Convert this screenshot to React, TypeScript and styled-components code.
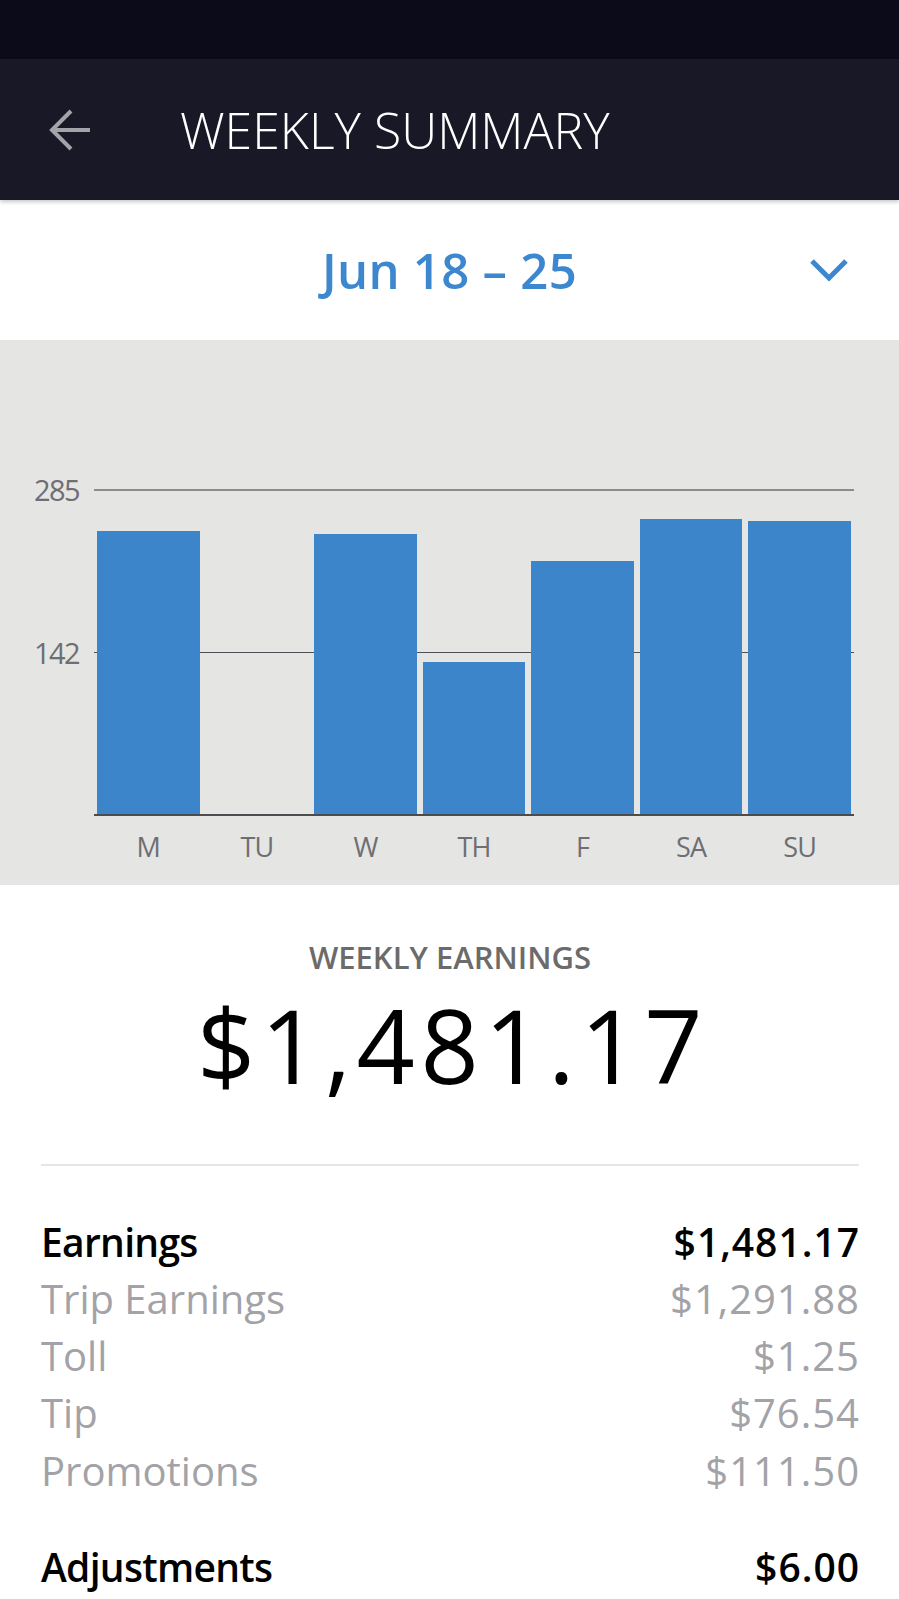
import React from "react";
import styled, { createGlobalStyle } from "styled-components";

const GlobalStyle = createGlobalStyle`
  html, body { margin: 0; padding: 0; background: #ffffff; }
  body { font-family: "Open Sans", "Noto Sans", "Liberation Sans", sans-serif; -webkit-font-smoothing: antialiased; }
  * { box-sizing: border-box; }
`;

const Screen = styled.div`
  width: 899px;
  min-height: 1599px;
  background: #ffffff;
  overflow: hidden;
`;

const StatusBar = styled.div`
  height: 59px;
  background: #0b0b1a;
`;

const AppBar = styled.header`
  height: 141px;
  background: #181826;
  display: flex;
  align-items: center;
  padding-left: 47px;
  position: relative;
  z-index: 2;
  box-shadow: 0 2px 4px rgba(0, 0, 0, 0.22);
`;

const BackButton = styled.button`
  width: 46px;
  height: 46px;
  padding: 0;
  border: none;
  background: none;
  display: flex;
  align-items: center;
  justify-content: center;
  margin-right: 87px;
`;

const Title = styled.h1`
  margin: 0;
  font-size: 50px;
  font-weight: 300;
  color: #ffffff;
  letter-spacing: 0;
  line-height: 1;
`;

const DateRow = styled.div`
  height: 140px;
  display: flex;
  align-items: center;
  justify-content: center;
  position: relative;
`;

const DateText = styled.span`
  font-size: 49px;
  font-weight: 600;
  color: #3c87cd;
  line-height: 1;
  letter-spacing: 0.3px;
`;

const ChevronButton = styled.button`
  position: absolute;
  right: 50px;
  top: 50%;
  transform: translateY(-50%);
  padding: 0;
  border: none;
  background: none;
  display: flex;
`;

const ChartSection = styled.section`
  height: 545px;
  background: #e5e5e3;
  padding-top: 132px;
`;

const PlotArea = styled.div`
  position: relative;
  height: 344px;
  margin-right: 45px;
`;

const GridRow = styled.div`
  position: absolute;
  left: 0;
  right: 0;
  display: flex;
  align-items: center;
  transform: translateY(-50%);
  z-index: 0;
`;

const AxisLabel = styled.span`
  width: 79px;
  text-align: right;
  font-size: 29px;
  color: #6e6e73;
  line-height: 32px;
  letter-spacing: -1.6px;
`;

const GridLine = styled.div<{ $tone: string }>`
  flex: 1;
  margin-left: 15px;
  height: 1.5px;
  background: ${(p) => p.$tone};
`;

const Bars = styled.div`
  position: relative;
  z-index: 1;
  margin-left: 94px;
  height: 100%;
  display: flex;
  align-items: flex-end;
  gap: 6px;
  padding: 0 3px;
  border-bottom: 2px solid #4b4b50;
`;

const BarSlot = styled.div`
  flex: 1;
  height: 100%;
  display: flex;
  align-items: flex-end;
`;

const Bar = styled.div`
  width: 100%;
  background: #3c85cb;
`;

const XAxis = styled.div`
  margin-left: 94px;
  margin-right: 45px;
  display: flex;
  gap: 6px;
  padding: 0 3px;
  height: 60px;
  align-items: center;
`;

const DayLabel = styled.span`
  flex: 1;
  text-align: center;
  font-size: 27px;
  color: #6e6e73;
  letter-spacing: -0.8px;
`;

const Summary = styled.section`
  padding: 54px 40px 0 41px;
  display: flex;
  flex-direction: column;
  align-items: center;
`;

const SummaryLabel = styled.div`
  font-size: 31px;
  font-weight: 600;
  color: #6b6b6b;
  line-height: 36px;
  letter-spacing: 0;
`;

const SummaryAmount = styled.div`
  margin-top: 15px;
  font-size: 102px;
  font-weight: 400;
  color: #000000;
  line-height: 110px;
  letter-spacing: 5.5px;
  margin-right: -5px;
`;

const Divider = styled.hr`
  align-self: stretch;
  margin: 64px 0 0;
  border: none;
  height: 1.5px;
  background: #e6e6e8;
`;

const Breakdown = styled.div`
  align-self: stretch;
  margin-top: 47px;
  display: flex;
  flex-direction: column;
`;

const Row = styled.div<{ $gapTop?: boolean }>`
  display: flex;
  justify-content: space-between;
  align-items: center;
  height: 57.4px;
  margin-top: ${(p) => (p.$gapTop ? "38px" : "0")};
`;

const RowLabel = styled.span<{ $strong?: boolean }>`
  font-size: ${(p) => (p.$strong ? "39px" : "40px")};
  line-height: 1;
  font-weight: ${(p) => (p.$strong ? 600 : 400)};
  color: ${(p) => (p.$strong ? "#000000" : "#a2a2a7")};
  letter-spacing: ${(p) => (p.$strong ? "-0.7px" : "0")};
`;

const RowValue = styled.span<{ $strong?: boolean }>`
  font-size: ${(p) => (p.$strong ? "39px" : "40px")};
  line-height: 1;
  font-weight: ${(p) => (p.$strong ? 600 : 400)};
  color: ${(p) => (p.$strong ? "#000000" : "#a2a2a7")};
  letter-spacing: 1px;
  margin-right: -1px;
`;

const MAX = 285;
const PLOT_H = 324;
const BASE = 342;

const days = [
  { d: "M", v: 249 },
  { d: "TU", v: 0 },
  { d: "W", v: 246.5 },
  { d: "TH", v: 134 },
  { d: "F", v: 222.5 },
  { d: "SA", v: 259.5 },
  { d: "SU", v: 257.5 },
];

const grid = [
  { label: "285", v: 285, tone: "#8c8c8e" },
  { label: "142", v: 142, tone: "#4f4f55" },
];

const rows = [
  { l: "Earnings", r: "$1,481.17", strong: true },
  { l: "Trip Earnings", r: "$1,291.88" },
  { l: "Toll", r: "$1.25" },
  { l: "Tip", r: "$76.54" },
  { l: "Promotions", r: "$111.50" },
];

export default function App() {
  return (
    <Screen>
      <GlobalStyle />
      <StatusBar />
      <AppBar>
        <BackButton aria-label="Back">
          <svg width="44" height="44" viewBox="0 0 44 44" fill="none">
            <path d="M42 22H4" stroke="#a3a3aa" strokeWidth="4" />
            <path d="M23 3L4 22L23 41" stroke="#a3a3aa" strokeWidth="4" strokeLinejoin="miter" />
          </svg>
        </BackButton>
        <Title>WEEKLY SUMMARY</Title>
      </AppBar>
      <DateRow>
        <DateText>Jun 18 – 25</DateText>
        <ChevronButton aria-label="Choose week">
          <svg width="40" height="26" viewBox="0 0 40 26" fill="none">
            <path d="M3 4L20 21L37 4" stroke="#3c87cd" strokeWidth="5" />
          </svg>
        </ChevronButton>
      </DateRow>
      <ChartSection>
        <PlotArea>
          {grid.map((g) => (
            <GridRow key={g.label} style={{ top: `${BASE - (g.v * PLOT_H) / MAX}px` }}>
              <AxisLabel>{g.label}</AxisLabel>
              <GridLine $tone={g.tone} />
            </GridRow>
          ))}
          <Bars>
            {days.map((d) => (
              <BarSlot key={d.d}>
                {d.v > 0 && <Bar style={{ height: `${(d.v * PLOT_H) / MAX}px` }} />}
              </BarSlot>
            ))}
          </Bars>
        </PlotArea>
        <XAxis>
          {days.map((d) => (
            <DayLabel key={d.d}>{d.d}</DayLabel>
          ))}
        </XAxis>
      </ChartSection>
      <Summary>
        <SummaryLabel>WEEKLY EARNINGS</SummaryLabel>
        <SummaryAmount>$1,481.17</SummaryAmount>
        <Divider />
        <Breakdown>
          {rows.map((r) => (
            <Row key={r.l}>
              <RowLabel $strong={r.strong}>{r.l}</RowLabel>
              <RowValue $strong={r.strong}>{r.r}</RowValue>
            </Row>
          ))}
          <Row $gapTop>
            <RowLabel $strong>Adjustments</RowLabel>
            <RowValue $strong>$6.00</RowValue>
          </Row>
        </Breakdown>
      </Summary>
    </Screen>
  );
}
